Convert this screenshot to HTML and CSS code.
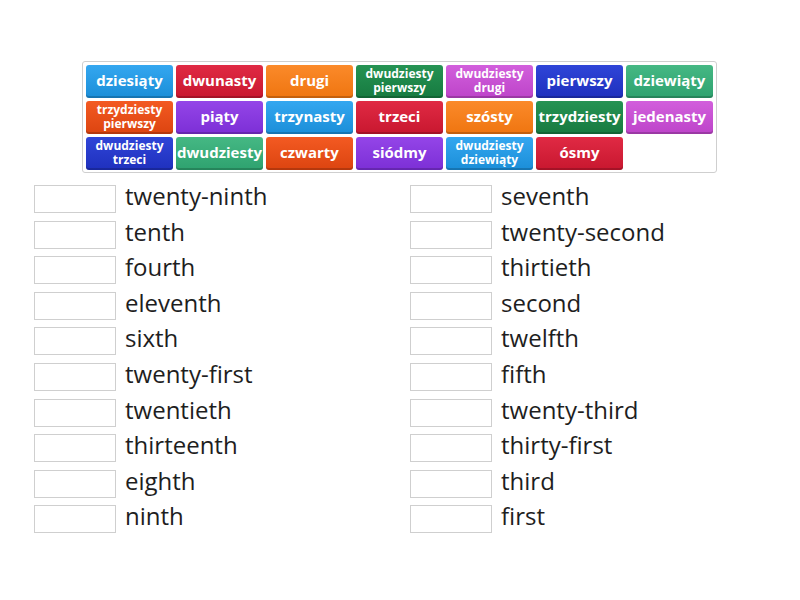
FILE: index.html
```html
<!DOCTYPE html>
<html lang="pl">
<head>
    <meta charset="UTF-8">
    <meta name="viewport" content="width=device-width, initial-scale=1.0">
    <title>Match up</title>
    <link rel="stylesheet" href="styles.css">
</head>
<body>

    <!-- tiles to drag -->
    <div class="bank">
        <div class="tile blue">dziesiąty</div>
        <div class="tile red">dwunasty</div>
        <div class="tile orange">drugi</div>
        <div class="tile green small">dwudziesty<br>pierwszy</div>
        <div class="tile pink small">dwudziesty<br>drugi</div>
        <div class="tile navy">pierwszy</div>
        <div class="tile teal">dziewiąty</div>

        <div class="tile flame small">trzydziesty<br>pierwszy</div>
        <div class="tile purple">piąty</div>
        <div class="tile blue">trzynasty</div>
        <div class="tile red">trzeci</div>
        <div class="tile orange">szósty</div>
        <div class="tile green">trzydziesty</div>
        <div class="tile pink">jedenasty</div>

        <div class="tile navy small">dwudziesty<br>trzeci</div>
        <div class="tile teal">dwudziesty</div>
        <div class="tile flame">czwarty</div>
        <div class="tile purple">siódmy</div>
        <div class="tile blue small">dwudziesty<br>dziewiąty</div>
        <div class="tile red">ósmy</div>
    </div>

    <!-- answer slots -->
    <div class="answers">
        <div class="row"><span class="slot"></span><span class="word">twenty-ninth</span></div>
        <div class="row"><span class="slot"></span><span class="word">seventh</span></div>
        <div class="row"><span class="slot"></span><span class="word">tenth</span></div>
        <div class="row"><span class="slot"></span><span class="word">twenty-second</span></div>
        <div class="row"><span class="slot"></span><span class="word">fourth</span></div>
        <div class="row"><span class="slot"></span><span class="word">thirtieth</span></div>
        <div class="row"><span class="slot"></span><span class="word">eleventh</span></div>
        <div class="row"><span class="slot"></span><span class="word">second</span></div>
        <div class="row"><span class="slot"></span><span class="word">sixth</span></div>
        <div class="row"><span class="slot"></span><span class="word">twelfth</span></div>
        <div class="row"><span class="slot"></span><span class="word">twenty-first</span></div>
        <div class="row"><span class="slot"></span><span class="word">fifth</span></div>
        <div class="row"><span class="slot"></span><span class="word">twentieth</span></div>
        <div class="row"><span class="slot"></span><span class="word">twenty-third</span></div>
        <div class="row"><span class="slot"></span><span class="word">thirteenth</span></div>
        <div class="row"><span class="slot"></span><span class="word">thirty-first</span></div>
        <div class="row"><span class="slot"></span><span class="word">eighth</span></div>
        <div class="row"><span class="slot"></span><span class="word">third</span></div>
        <div class="row"><span class="slot"></span><span class="word">ninth</span></div>
        <div class="row"><span class="slot"></span><span class="word">first</span></div>
    </div>

</body>
</html>
```

FILE: styles.css
```css
body {
    margin: 0;
    padding: 61px 0 0 0;
    font-family: 'Open Sans', sans-serif;
    background: white;
    color: #222;
}

/* tile bank */
.bank {
    margin-left: 82px;
    width: 627px;
    border: 1px solid #cfcfcf;
    border-radius: 3px;
    padding: 3px 3px 2px 3px;
    display: grid;
    grid-template-columns: repeat(7, 87px);
    grid-auto-rows: 33px;
    column-gap: 3px;
    row-gap: 3px;
}

.tile {
    display: flex;
    align-items: center;
    justify-content: center;
    text-align: center;
    color: white;
    font-weight: 700;
    font-size: 15px;
    line-height: 18px;
    padding-bottom: 3px;
    box-sizing: border-box;
    border-radius: 3px;
    box-shadow: inset 0 -2px 0 rgba(0, 0, 0, 0.18);
    white-space: nowrap;
}

.tile.small {
    font-size: 12px;
    line-height: 14px;
    padding-bottom: 2px;
}

/* tile colours */
.blue   { background: linear-gradient(#34a7f0, #1b8ed8); }
.red    { background: linear-gradient(#e02a44, #c8172f); }
.orange { background: linear-gradient(#fb8a2a, #ef7510); }
.green  { background: linear-gradient(#259353, #177a40); }
.pink   { background: linear-gradient(#d25fdc, #bd44c9); }
.navy   { background: linear-gradient(#2f45d8, #1f30bd); }
.teal   { background: linear-gradient(#45b884, #2ea26f); }
.flame  { background: linear-gradient(#f35a22, #dc4410); }
.purple { background: linear-gradient(#9445e8, #7c2fd6); }

/* answer rows */
.answers {
    margin: 12px 0 0 34px;
    display: grid;
    grid-template-columns: 376px 376px;
    row-gap: 7.6px;
}

.row {
    display: flex;
    align-items: center;
    gap: 9px;
}

.slot {
    width: 80px;
    height: 26px;
    border: 1px solid #cfcfcf;
    background: white;
    flex: none;
}

.word {
    font-size: 24px;
    line-height: 28px;
    margin-top: -6px;
    color: #1e1e1e;
}
```
